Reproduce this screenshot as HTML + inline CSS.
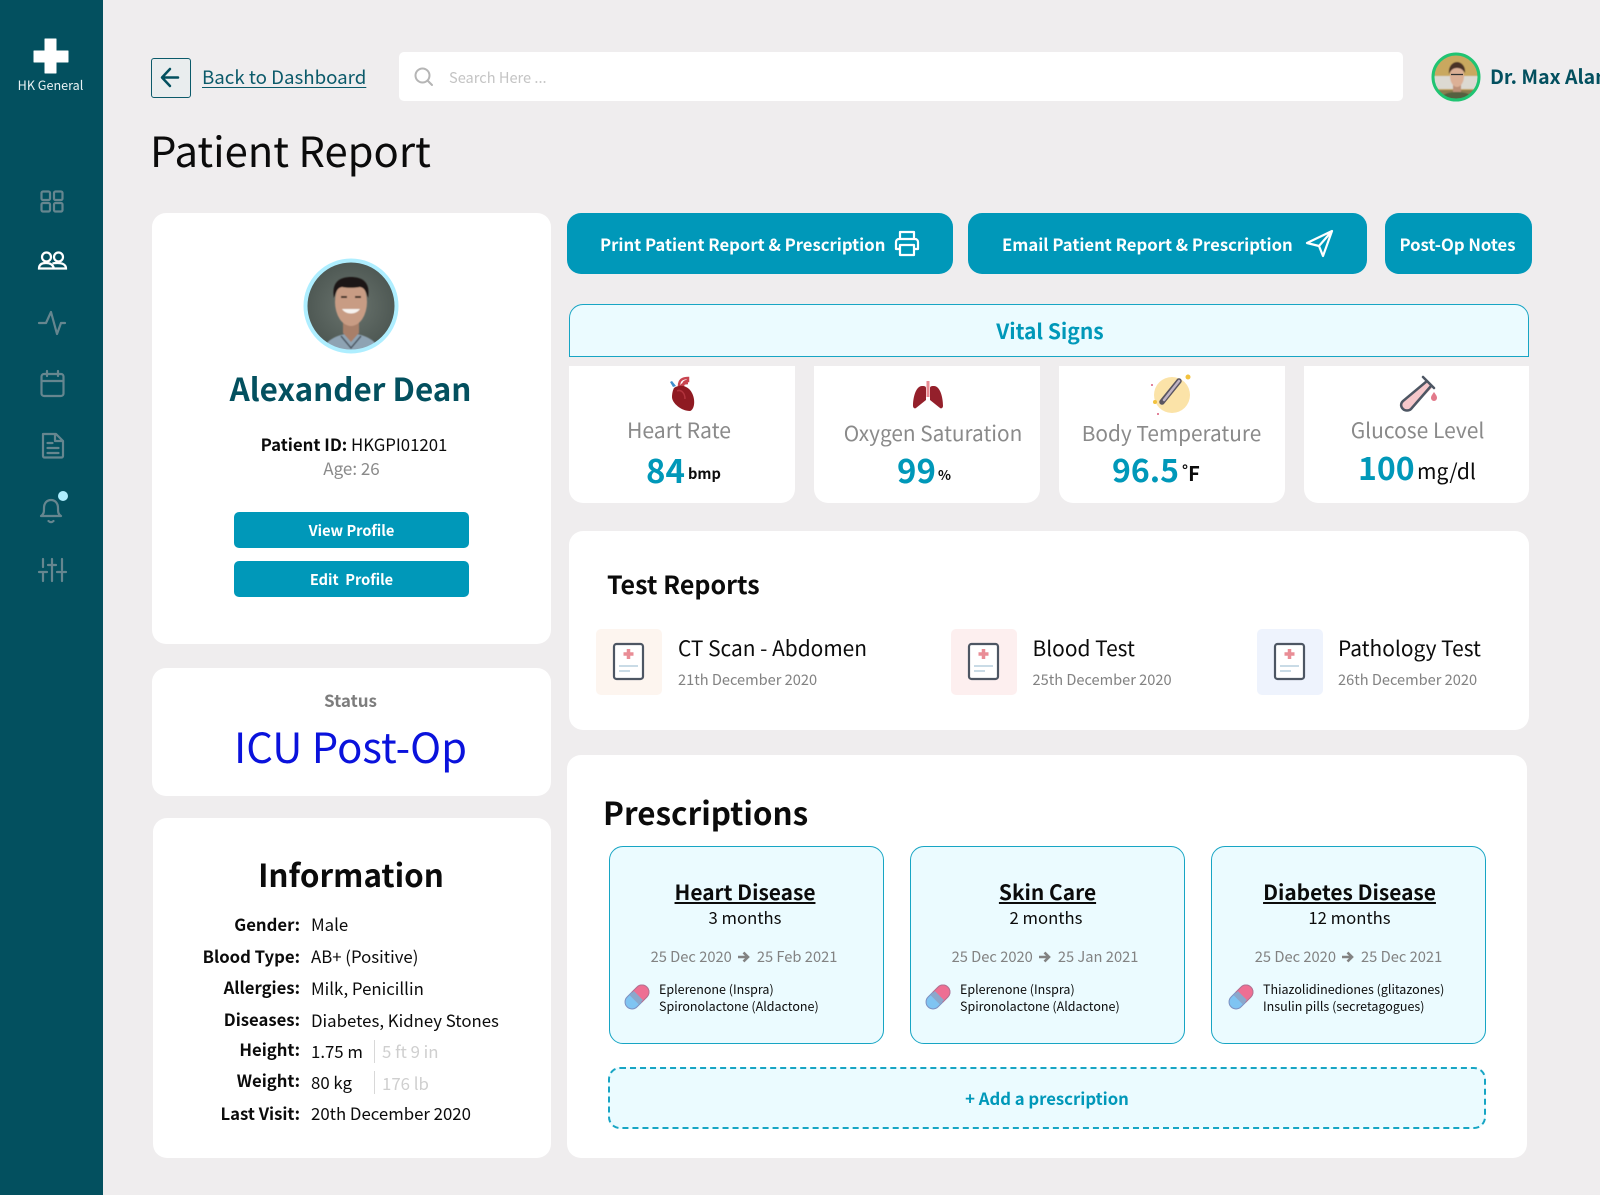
<!DOCTYPE html>
<html lang="en"><head><meta charset="utf-8"><title>Patient Report</title>
<style>
html,body{margin:0;padding:0;width:1600px;height:1195px;overflow:hidden;background:#efedee}
body{position:relative;font-family:"Noto Sans CJK JP","Liberation Sans",sans-serif;color:#0b0b0b}
.a,.t{position:absolute}
.t{white-space:nowrap;line-height:30px;height:30px}
.c{text-align:center}
.b{font-weight:700}
.card{position:absolute;background:#fff;border-radius:14px}
.btn{position:absolute;background:#0098b9;color:#fff;font-weight:700;text-align:center}
svg{position:absolute;overflow:visible}
.sub{position:absolute;background:#ebfbff;border:1.5px solid #17a5c4;border-radius:14px;box-sizing:border-box;top:846px;height:198px;width:275px}
.g{color:#828282}
svg.ar{position:static;display:inline-block;width:13px;height:12px;margin:0 7px 0 5px;vertical-align:-1px}
</style></head><body>

<div class="a" style="left:0;top:0;width:103px;height:1195px;background:#03505f"></div>
<svg style="left:0;top:0" width="103" height="600">
<path d="M45 39h11v12h12v11H56v11H45V62H34V51h11z" fill="#fff" stroke="#fff" stroke-linejoin="round"/>
<g fill="none" stroke="#66868f" stroke-width="2.2" stroke-linejoin="round" stroke-linecap="round">
<rect x="41.5" y="191.5" width="8.5" height="8.5" rx="1.5"/><rect x="54" y="191.5" width="8.5" height="8.5" rx="1.5"/><rect x="41.5" y="203" width="8.500" height="8.500" rx="1.500"/><rect x="54" y="203" width="8.500" height="8.500" rx="1.500"/>
<path d="M39 323h7l5-11 6 22 4-11h4"/>
<rect x="41.500" y="374" width="22" height="22" rx="2.500"/><path d="M41.500 381h22M47 371v5M58 371v5"/>
<path d="M43 434h13l7 7v15a1.500 1.500 0 0 1-1.500 1.500h-17A1.500 1.500 0 0 1 43 456zM55 434v7h8M47.500 443h5M47.500 448h11M47.500 453h11"/>
<path d="M41 516c3-2 3-4 3-8 0-5 3-8 7-8s7 3 7 8c0 4 0 6 3 8zM48.500 521c1.500 1.500 3.500 1.500 5 0"/>
<path d="M43 559v8M43 572v9M52 559v5M52 566v15M62 559v11M62 573v8M39 572h8M48 565h8M57 572h9"/>
</g>
<g fill="none" stroke="#fff" stroke-width="2.200">
<circle cx="46.500" cy="257" r="4.500"/><circle cx="58.500" cy="257" r="4.500"/>
<path d="M39 268.500c0-4 3-5.500 7-5.500s7 1.500 8 5.500zM52.500 263.500c1.500-.5 3-.5 5-.5 4.500 0 8.500 1.500 8.500 5.500H54"/>
</g>
<circle cx="63" cy="496" r="5" fill="#aeeeff"/>
</svg>
<div class="t c" style="left:0;top:70px;width:101px;font-size:12.600px;color:#eaf3f5">HK General</div>

<div class="a" style="left:151px;top:58px;width:38px;height:38px;border:1.500px solid #0b5a6a;border-radius:3px;background:#e9edee"></div>
<svg style="left:151px;top:58px" width="40" height="40"><path d="M27 19.500H12M19 11l-8 8.500 8 8.500" fill="none" stroke="#03505f" stroke-width="2.500" stroke-linecap="round" stroke-linejoin="round"/></svg>
<div class="t" style="left:202px;top:62px;font-size:18.700px;color:#0b5a6a;text-decoration:underline;text-underline-offset:3px;text-decoration-thickness:1px">Back to Dashboard</div>

<div class="a" style="left:399px;top:52px;width:1004px;height:49px;background:#fff;border-radius:5px"></div>
<svg style="left:414px;top:67px" width="20" height="20"><circle cx="8.500" cy="8.500" r="7" fill="none" stroke="#b5b5b5" stroke-width="2"/><path d="M14 14l4 4" stroke="#b5b5b5" stroke-width="2" stroke-linecap="round"/></svg>
<div class="t" style="left:449px;top:63px;font-size:14.600px;color:#c4c4c4">Search Here ...</div>

<svg style="left:1431px;top:52px" width="50" height="50">
<defs><clipPath id="d"><circle cx="25" cy="25" r="23"/></clipPath><filter id="bl"><feGaussianBlur stdDeviation=".6"/></filter></defs>
<g clip-path="url(#d)"><g filter="url(#bl)"><rect width="50" height="50" fill="#c9a85f"/><rect y="24" width="50" height="13" fill="#dcd9d2"/><rect y="38" width="50" height="12" fill="#8a7c50"/><path d="M8 50c2-8 9-10 18-10s15 2 17 10z" fill="#55613f"/><rect x="22" y="30" width="8" height="10" fill="#bd9078"/><ellipse cx="26" cy="24" rx="7" ry="11" fill="#dcb096"/><path d="M18 22c-1-8 4-12 8-12s9 4 8 11c-2-3-4-5-8-5s-6 2-8 6z" fill="#4a3227"/></g><path d="M20 22.500h5M27 22.500h5M25 22.500h2" stroke="#333" stroke-width="1.200" fill="none"/></g>
<circle cx="25" cy="25" r="23" fill="none" stroke="#20c472" stroke-width="3"/></svg>
<div class="t b" style="left:1490px;top:61px;font-size:19.500px;color:#03505f">Dr. Max Alan</div>

<div class="t" style="left:150px;top:120px;height:60px;line-height:60px;font-size:41.800px">Patient Report</div>

<!-- patient card -->
<div class="card" style="left:152px;top:213px;width:399px;height:431px"></div>
<svg style="left:303px;top:258px" width="96" height="96">
<defs><clipPath id="p"><circle cx="48" cy="48" r="44"/></clipPath>
<radialGradient id="bg" cx=".5" cy=".5" r=".7"><stop offset="0" stop-color="#6a746e"/><stop offset="1" stop-color="#404a46"/></radialGradient></defs>
<g clip-path="url(#p)"><rect width="96" height="96" fill="url(#bg)"/>
<g filter="url(#bl)"><path d="M18 96c3-13 14-19 30-21 16 2 27 8 30 21z" fill="#8ea3b3"/>
<path d="M40 60h16v15l-8 9-8-9z" fill="#a87f69"/>
<ellipse cx="48" cy="44" rx="16" ry="24" fill="#c89c84"/>
<path d="M31 40c-3-17 7-21 17-21s20 4 17 21c-2-6-3-10-8-11-6 1-13 1-18 0-5 1-6 5-8 11z" fill="#1f1815"/>
<path d="M39 51c4 6 14 6 18 0z" fill="#f7f3ef"/>
<path d="M38 39h6M52 39h6" stroke="#3a2a22" stroke-width="2"/>
<path d="M38 78l10 12 10-12" fill="none" stroke="#4a5560" stroke-width="1.500"/></g></g>
<circle cx="48" cy="48" r="45.500" fill="none" stroke="#aeeeff" stroke-width="4"/></svg>
<div class="t c b" style="left:152px;top:367px;width:397px;height:44px;line-height:44px;font-size:31.400px;color:#03505f">Alexander Dean</div>
<div class="t c" style="left:152px;top:429px;width:404px;font-size:16.800px"><b>Patient ID:</b> HKGPI01201</div>
<div class="t c" style="left:152px;top:453px;width:399px;font-size:17px;color:#8a8a8a">Age: 26</div>
<div class="btn" style="left:234px;top:512px;width:235px;height:36px;line-height:37px;border-radius:5px;font-size:14.600px">View Profile</div>
<div class="btn" style="left:234px;top:561px;width:235px;height:36px;line-height:37px;border-radius:5px;font-size:14.600px">Edit&nbsp; Profile</div>

<div class="card" style="left:152px;top:668px;width:399px;height:128px"></div>
<div class="t c b" style="left:152px;top:685px;width:397px;font-size:17px;color:#7d7d7d">Status</div>
<div class="t c" style="left:152px;top:716px;width:397px;height:60px;line-height:60px;font-size:41.800px;color:#0a12dc">ICU Post-Op</div>

<div class="card" style="left:153px;top:818px;width:398px;height:340px"></div>
<div class="t c b" style="left:153px;top:852px;width:396px;height:46px;line-height:46px;font-size:31.400px">Information</div>
<div class="t b" style="left:100px;width:200px;text-align:right;top:909px;font-size:16.700px">Gender:</div><div class="t" style="left:311px;top:909px;font-size:16.800px">Male</div>
<div class="t b" style="left:100px;width:200px;text-align:right;top:941px;font-size:16.700px">Blood Type:</div><div class="t" style="left:311px;top:941px;font-size:16.800px">AB+ (Positive)</div>
<div class="t b" style="left:100px;width:200px;text-align:right;top:972px;font-size:16.700px">Allergies:</div><div class="t" style="left:311px;top:973px;font-size:16.800px">Milk, Penicillin</div>
<div class="t b" style="left:100px;width:200px;text-align:right;top:1004px;font-size:16.700px">Diseases:</div><div class="t" style="left:311px;top:1005px;font-size:16.800px">Diabetes, Kidney Stones</div>
<div class="t b" style="left:100px;width:200px;text-align:right;top:1034px;font-size:16.700px">Height:</div><div class="t" style="left:311px;top:1036px;font-size:16.800px">1.75 m</div>
<div class="a" style="left:373.500px;top:1040px;width:1.500px;height:23px;background:#d8d8d8"></div><div class="t" style="left:382px;top:1036px;font-size:16.800px;color:#cfcfcf">5 ft 9 in</div>
<div class="t b" style="left:100px;width:200px;text-align:right;top:1065px;font-size:16.700px">Weight:</div><div class="t" style="left:311px;top:1067px;font-size:16.800px">80 kg</div>
<div class="a" style="left:373.500px;top:1071px;width:1.500px;height:23px;background:#d8d8d8"></div><div class="t" style="left:382px;top:1068px;font-size:16.800px;color:#cfcfcf">176 lb</div>
<div class="t b" style="left:100px;width:200px;text-align:right;top:1098px;font-size:16.700px">Last Visit:</div><div class="t" style="left:311px;top:1098px;font-size:16.800px">20th December 2020</div>

<!-- action buttons -->
<div class="btn" style="left:567px;top:213px;width:386px;height:61px;border-radius:14px"></div>
<div class="t b" style="left:600px;top:229px;font-size:16.700px;color:#fff">Print Patient Report &amp; Prescription</div>
<svg style="left:894px;top:230px" width="26" height="28"><g fill="none" stroke="#fff" stroke-width="2.200" stroke-linejoin="round"><path d="M6 9V2h14v7M6 19H2v-7a3 3 0 0 1 3-3h16a3 3 0 0 1 3 3v7h-4"/><rect x="6" y="15" width="14" height="10"/></g></svg>
<div class="btn" style="left:968px;top:213px;width:399px;height:61px;border-radius:14px"></div>
<div class="t b" style="left:1002px;top:229px;font-size:16.700px;color:#fff">Email Patient Report &amp; Prescription</div>
<svg style="left:1306px;top:230px" width="28" height="28"><path d="M26 1L1 13l12 3 4 10zM13 16L26 1" fill="none" stroke="#fff" stroke-width="2.200" stroke-linejoin="round"/></svg>
<div class="btn" style="left:1385px;top:213px;width:147px;height:61px;border-radius:14px"></div>
<div class="t b c" style="left:1384px;top:229px;width:147px;font-size:16.700px;color:#fff">Post-Op Notes</div>

<!-- vitals -->
<div class="a" style="left:569px;top:304px;width:960px;height:53px;box-sizing:border-box;background:#ebfbff;border:1.500px solid #17a5c4;border-radius:14px 14px 0 0"></div>
<div class="t c b" style="left:570px;top:316px;width:960px;font-size:21px;color:#0098b9">Vital Signs</div>

<div class="card" style="left:569px;top:366px;width:226px;height:137px;border-radius:0 0 14px 14px"></div>
<div class="card" style="left:814px;top:366px;width:226px;height:137px;border-radius:0 0 14px 14px"></div>
<div class="card" style="left:1059px;top:366px;width:226px;height:137px;border-radius:0 0 14px 14px"></div>
<div class="card" style="left:1304px;top:366px;width:225px;height:137px;border-radius:0 0 14px 14px"></div>

<svg style="left:668px;top:375px" width="32" height="36">
<path d="M5 12l-3-5 2-1 4 5" fill="#3f8fce"/>
<path d="M11 11c0-6 3-8 9-8v3c-4 0-5 2-5 6M13 13c0-4 3-5 7-5" fill="none" stroke="#c8444f" stroke-width="2.500"/>
<path d="M6 13c5-4 14-3 18 5 4 8 2 17-2 18-9 0-18-8-18-14 0-4 1-7 2-9z" fill="#8f1a22"/>
<path d="M9 16c4-2 8 2 8 8" fill="none" stroke="#c8444f" stroke-width="1.500" opacity=".6"/></svg>
<svg style="left:912px;top:380px" width="32" height="32">
<path d="M14 8v12L4 28c-1 1-3 0-3-2 0-9 3-20 9-20 2 0 4 0 4 2zM18 8v12l10 8c1 1 3 0 3-2 0-9-3-20-9-20-2 0-4 0-4 2z" fill="#94202b"/>
<rect x="14.500" y="1" width="3" height="16" fill="#e88a92"/></svg>
<svg style="left:1148px;top:372px" width="48" height="48">
<circle cx="24" cy="23" r="18" fill="#fbe3a8"/><path d="M31 9L14 30" stroke="#5a5560" stroke-width="5.500" stroke-linecap="round"/><path d="M31 9L16 28" stroke="#c0b4c4" stroke-width="2.500" stroke-linecap="round"/>
<circle cx="40" cy="5" r="2.500" fill="#f2c23e"/><circle cx="7" cy="30" r="2" fill="#f2c23e"/><circle cx="4" cy="13" r="1" fill="#d85a7a"/><circle cx="10" cy="42" r="1" fill="#d85a7a"/></svg>
<svg style="left:1396px;top:376px" width="44" height="36">
<path d="M31 6L7 26c-3 3-2 6 0 7 2 2 6 2 8 0L36 12z" fill="#f6c8cb"/>
<path d="M27 1l11 11M31 5L7 25c-3 3-2 6 0 8 2 2 6 2 8 0L35 10" fill="none" stroke="#4d5663" stroke-width="2.500" stroke-linecap="round"/>
<path d="M38 16c2 3 3 4 3 6a3 3 0 0 1-6 0c0-2 1-3 3-6z" fill="#e2798a"/></svg>

<div class="t c" style="left:569px;top:415px;width:220px;font-size:21.200px;color:#8a8a8a">Heart Rate</div>
<div class="t c" style="left:814px;top:417px;width:238px;font-size:20.800px;color:#8a8a8a">Oxygen Saturation</div>
<div class="t c" style="left:1059px;top:417px;width:225px;font-size:20.800px;color:#8a8a8a">Body Temperature</div>
<div class="t c" style="left:1304px;top:415px;width:227px;font-size:21px;color:#8a8a8a">Glucose Level</div>

<div class="t b" style="left:646px;top:449px;height:40px;line-height:40px;font-size:33px;color:#0098b9">84</div>
<div class="t b" style="left:688px;top:459px;font-size:14.600px">bmp</div>
<div class="t b" style="left:897px;top:449px;height:40px;line-height:40px;font-size:33px;color:#0098b9">99</div>
<div class="t b" style="left:938px;top:459px;font-size:13.500px">%</div>
<div class="t b" style="left:1112px;top:449px;height:40px;line-height:40px;font-size:32px;color:#0098b9">96.5</div>
<div class="t b" style="left:1182px;top:458px;font-size:20px"><span style="font-size:15px;position:relative;top:-5px">&deg;</span>F</div>
<div class="t b" style="left:1358px;top:447px;height:40px;line-height:40px;font-size:32px;color:#0098b9">100</div>
<div class="t" style="left:1417px;top:456px;font-size:21px">mg/dl</div>

<!-- test reports -->
<div class="card" style="left:569px;top:531px;width:960px;height:199px"></div>
<div class="t b" style="left:607px;top:569px;font-size:25px">Test Reports</div>

<div class="a" style="left:596px;top:629px;width:66px;height:66px;background:#fdf5ef;border-radius:5px"></div>
<div class="a" style="left:951px;top:629px;width:66px;height:66px;background:#fdefef;border-radius:5px"></div>
<div class="a" style="left:1257px;top:629px;width:66px;height:66px;background:#eef3fd;border-radius:5px"></div>
<svg style="left:595px;top:629px" width="66" height="66"><rect x="19" y="15" width="29" height="35" rx="2.500" fill="#fff" stroke="#4d5663" stroke-width="2.200"/><path d="M33.500 20v10M28.500 25h10" stroke="#e98d96" stroke-width="3.500"/><path d="M24 37h19M24 42h11" stroke="#c9dbe6" stroke-width="2"/></svg>
<svg style="left:950px;top:629px" width="66" height="66"><rect x="19" y="15" width="29" height="35" rx="2.500" fill="#fff" stroke="#4d5663" stroke-width="2.200"/><path d="M33.500 20v10M28.500 25h10" stroke="#e98d96" stroke-width="3.500"/><path d="M24 37h19M24 42h11" stroke="#c9dbe6" stroke-width="2"/></svg>
<svg style="left:1256px;top:629px" width="66" height="66"><rect x="19" y="15" width="29" height="35" rx="2.500" fill="#fff" stroke="#4d5663" stroke-width="2.200"/><path d="M33.500 20v10M28.500 25h10" stroke="#e98d96" stroke-width="3.500"/><path d="M24 37h19M24 42h11" stroke="#c9dbe6" stroke-width="2"/></svg>

<div class="t" style="left:678px;top:633px;font-size:20.900px">CT Scan - Abdomen</div>
<div class="t g" style="left:678px;top:665px;font-size:14.600px">21th December 2020</div>
<div class="t" style="left:1032.500px;top:633px;font-size:20.900px">Blood Test</div>
<div class="t g" style="left:1032.500px;top:665px;font-size:14.600px">25th December 2020</div>
<div class="t" style="left:1338px;top:633px;font-size:20.900px">Pathology Test</div>
<div class="t g" style="left:1338px;top:665px;font-size:14.600px">26th December 2020</div>

<!-- prescriptions -->
<div class="card" style="left:567px;top:755px;width:960px;height:403px"></div>
<div class="t b" style="left:603px;top:790px;height:46px;line-height:46px;font-size:31.400px">Prescriptions</div>

<div class="sub" style="left:609px"></div>
<div class="sub" style="left:910px"></div>
<div class="sub" style="left:1211px"></div>

<div class="t c b" style="left:609px;top:877px;width:272px;font-size:20.900px;text-decoration:underline;text-underline-offset:2px">Heart Disease</div>
<div class="t c" style="left:609px;top:902px;width:272px;font-size:16.700px">3 months</div>
<div class="t c g" style="left:609px;top:942px;width:270px;font-size:14.700px">25 Dec 2020<svg class="ar" viewBox="0 0 13 12"><path d="M1 6h10M6.500 1.500L11 6l-4.500 4.500" fill="none" stroke="#828282" stroke-width="2.600"/></svg>25 Feb 2021</div>
<div class="t" style="left:659px;top:974px;font-size:12.500px">Eplerenone (Inspra)</div>
<div class="t" style="left:659px;top:991px;font-size:12.500px">Spironolactone (Aldactone)</div>

<div class="t c b" style="left:910px;top:877px;width:275px;font-size:20.900px;text-decoration:underline;text-underline-offset:2px">Skin Care</div>
<div class="t c" style="left:910px;top:902px;width:272px;font-size:16.700px">2 months</div>
<div class="t c g" style="left:910px;top:942px;width:270px;font-size:14.700px">25 Dec 2020<svg class="ar" viewBox="0 0 13 12"><path d="M1 6h10M6.500 1.500L11 6l-4.500 4.500" fill="none" stroke="#828282" stroke-width="2.600"/></svg>25 Jan 2021</div>
<div class="t" style="left:960px;top:974px;font-size:12.500px">Eplerenone (Inspra)</div>
<div class="t" style="left:960px;top:991px;font-size:12.500px">Spironolactone (Aldactone)</div>

<div class="t c b" style="left:1211px;top:877px;width:277px;font-size:20.900px;text-decoration:underline;text-underline-offset:2px">Diabetes Disease</div>
<div class="t c" style="left:1211px;top:902px;width:277px;font-size:16.700px">12 months</div>
<div class="t c g" style="left:1211px;top:942px;width:275px;font-size:14.700px">25 Dec 2020<svg class="ar" viewBox="0 0 13 12"><path d="M1 6h10M6.500 1.500L11 6l-4.500 4.500" fill="none" stroke="#828282" stroke-width="2.600"/></svg>25 Dec 2021</div>
<div class="t" style="left:1263px;top:974px;font-size:12.500px">Thiazolidinediones (glitazones)</div>
<div class="t" style="left:1263px;top:991px;font-size:12.500px">Insulin pills (secretagogues)</div>

<svg style="left:625px;top:985px" width="26" height="26"><g transform="rotate(-45 12 12)"><rect x="-2" y="5" width="28" height="14" rx="7" fill="#7fc4f2" stroke="#7d8fc0"/><path d="M12 5h7a7 7 0 0 1 0 14h-7z" fill="#ee6f93" stroke="#b8708f"/><rect x="8" y="5.500" width="6" height="13" fill="#8aa8cc"/></g></svg>
<svg style="left:926px;top:985px" width="26" height="26"><g transform="rotate(-45 12 12)"><rect x="-2" y="5" width="28" height="14" rx="7" fill="#7fc4f2" stroke="#7d8fc0"/><path d="M12 5h7a7 7 0 0 1 0 14h-7z" fill="#ee6f93" stroke="#b8708f"/><rect x="8" y="5.500" width="6" height="13" fill="#8aa8cc"/></g></svg>
<svg style="left:1229px;top:985px" width="26" height="26"><g transform="rotate(-45 12 12)"><rect x="-2" y="5" width="28" height="14" rx="7" fill="#7fc4f2" stroke="#7d8fc0"/><path d="M12 5h7a7 7 0 0 1 0 14h-7z" fill="#ee6f93" stroke="#b8708f"/><rect x="8" y="5.500" width="6" height="13" fill="#8aa8cc"/></g></svg>

<div class="a" style="left:608px;top:1067px;width:878px;height:62px;box-sizing:border-box;background:#ebfbff;border:2px dashed #17a5c4;border-radius:12px"></div>
<div class="t c b" style="left:608px;top:1083px;width:878px;font-size:16.700px;color:#0098b9">+ Add a prescription</div>

</body></html>
